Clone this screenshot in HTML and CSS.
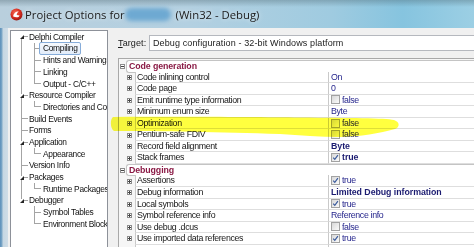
FILE: index.html
```html
<!DOCTYPE html>
<html>
<head>
<meta charset="utf-8">
<link rel="stylesheet" href="styles.css">
</head>
<body>
<div class="window">
  <div class="titlebar">
    <svg class="appicon" width="13" height="13" viewBox="0 0 13 13">
      <defs>
        <radialGradient id="rg" cx="0.4" cy="0.35" r="0.7">
          <stop offset="0" stop-color="#f46a55"/>
          <stop offset="0.6" stop-color="#d62a1e"/>
          <stop offset="1" stop-color="#8e1410"/>
        </radialGradient>
      </defs>
      <circle cx="6.5" cy="6.5" r="6" fill="url(#rg)"/>
      <path d="M3.2 8.6 C3.4 5.4 5.6 3.3 8.8 3.4 C7.2 4.4 6.6 5.6 6.8 7 L9.6 7.4 C9 9.2 6.8 10 3.2 8.6 Z" fill="#fff"/>
    </svg>
    <span class="title">Project Options for</span>
    <span class="redact"></span>
    <span class="title">(Win32 - Debug)</span>
  </div>
  <div class="client">
    <div class="tree">
      <div class="node l0 first exp"><i class="tw"></i>Delphi Compiler</div>
      <div class="node l1"><span class="sel">Compiling</span></div>
      <div class="node l1">Hints and Warnings</div>
      <div class="node l1">Linking</div>
      <div class="node l1 clast">Output - C/C++</div>
      <div class="node l0 exp"><i class="tw"></i>Resource Compiler</div>
      <div class="node l1 clast">Directories and Conditionals</div>
      <div class="node l0"><i class="tw"></i>Build Events</div>
      <div class="node l0"><i class="tw"></i>Forms</div>
      <div class="node l0 exp"><i class="tw"></i>Application</div>
      <div class="node l1 clast">Appearance</div>
      <div class="node l0"><i class="tw"></i>Version Info</div>
      <div class="node l0 exp"><i class="tw"></i>Packages</div>
      <div class="node l1 clast">Runtime Packages</div>
      <div class="node l0 last exp"><i class="tw"></i>Debugger</div>
      <div class="node l1 nol0">Symbol Tables</div>
      <div class="node l1 nol0 clast">Environment Block</div>
    </div>
    <div class="pane">
      <div class="target">
        <span class="tlabel"><u>T</u>arget:</span>
        <div class="combo">Debug configuration - 32-bit Windows platform</div>
      </div>
      <div class="grid">
        <div class="cat"><svg class="pm" width="5" height="5" viewBox="0 0 5 5"><rect x=".5" y=".5" width="4" height="4" fill="#fff" stroke="#8c8c8c"/><path d="M1 2.5H4" stroke="#444"/></svg><div class="cathead">Code generation</div></div>
        <div class="prop"><i></i><svg class="pm" width="5" height="5" viewBox="0 0 5 5"><rect x=".5" y=".5" width="4" height="4" fill="#fff" stroke="#8c8c8c"/><path d="M1 2.5H4M2.5 1V4" stroke="#444"/></svg><div class="name">Code inlining control</div><div class="val">On</div></div>
        <div class="prop"><i></i><svg class="pm" width="5" height="5" viewBox="0 0 5 5"><rect x=".5" y=".5" width="4" height="4" fill="#fff" stroke="#8c8c8c"/><path d="M1 2.5H4M2.5 1V4" stroke="#444"/></svg><div class="name">Code page</div><div class="val">0</div></div>
        <div class="prop"><i></i><svg class="pm" width="5" height="5" viewBox="0 0 5 5"><rect x=".5" y=".5" width="4" height="4" fill="#fff" stroke="#8c8c8c"/><path d="M1 2.5H4M2.5 1V4" stroke="#444"/></svg><div class="name">Emit runtime type information</div><div class="val"><span class="cb"></span>false</div></div>
        <div class="prop"><i></i><svg class="pm" width="5" height="5" viewBox="0 0 5 5"><rect x=".5" y=".5" width="4" height="4" fill="#fff" stroke="#8c8c8c"/><path d="M1 2.5H4M2.5 1V4" stroke="#444"/></svg><div class="name">Minimum enum size</div><div class="val">Byte</div></div>
        <div class="prop"><i></i><svg class="pm" width="5" height="5" viewBox="0 0 5 5"><rect x=".5" y=".5" width="4" height="4" fill="#fff" stroke="#8c8c8c"/><path d="M1 2.5H4M2.5 1V4" stroke="#444"/></svg><div class="name">Optimization</div><div class="val"><span class="cb"></span>false</div></div>
        <div class="prop"><i></i><svg class="pm" width="5" height="5" viewBox="0 0 5 5"><rect x=".5" y=".5" width="4" height="4" fill="#fff" stroke="#8c8c8c"/><path d="M1 2.5H4M2.5 1V4" stroke="#444"/></svg><div class="name">Pentium-safe FDIV</div><div class="val"><span class="cb"></span>false</div></div>
        <div class="prop"><i></i><svg class="pm" width="5" height="5" viewBox="0 0 5 5"><rect x=".5" y=".5" width="4" height="4" fill="#fff" stroke="#8c8c8c"/><path d="M1 2.5H4M2.5 1V4" stroke="#444"/></svg><div class="name">Record field alignment</div><div class="val b">Byte</div></div>
        <div class="prop"><i></i><svg class="pm" width="5" height="5" viewBox="0 0 5 5"><rect x=".5" y=".5" width="4" height="4" fill="#fff" stroke="#8c8c8c"/><path d="M1 2.5H4M2.5 1V4" stroke="#444"/></svg><div class="name">Stack frames</div><div class="val b"><span class="cb"><svg width="7" height="7" viewBox="0 0 7 7"><path d="M1.2 3.6 L2.8 5.3 L5.9 1.2" fill="none" stroke="#3a5a9c" stroke-width="1.2"/></svg></span>true</div></div>
        <div class="cat"><svg class="pm" width="5" height="5" viewBox="0 0 5 5"><rect x=".5" y=".5" width="4" height="4" fill="#fff" stroke="#8c8c8c"/><path d="M1 2.5H4" stroke="#444"/></svg><div class="cathead">Debugging</div></div>
        <div class="prop"><i></i><svg class="pm" width="5" height="5" viewBox="0 0 5 5"><rect x=".5" y=".5" width="4" height="4" fill="#fff" stroke="#8c8c8c"/><path d="M1 2.5H4M2.5 1V4" stroke="#444"/></svg><div class="name">Assertions</div><div class="val"><span class="cb"><svg width="7" height="7" viewBox="0 0 7 7"><path d="M1.2 3.6 L2.8 5.3 L5.9 1.2" fill="none" stroke="#3a5a9c" stroke-width="1.2"/></svg></span>true</div></div>
        <div class="prop"><i></i><svg class="pm" width="5" height="5" viewBox="0 0 5 5"><rect x=".5" y=".5" width="4" height="4" fill="#fff" stroke="#8c8c8c"/><path d="M1 2.5H4M2.5 1V4" stroke="#444"/></svg><div class="name">Debug information</div><div class="val b">Limited Debug information</div></div>
        <div class="prop"><i></i><svg class="pm" width="5" height="5" viewBox="0 0 5 5"><rect x=".5" y=".5" width="4" height="4" fill="#fff" stroke="#8c8c8c"/><path d="M1 2.5H4M2.5 1V4" stroke="#444"/></svg><div class="name">Local symbols</div><div class="val"><span class="cb"><svg width="7" height="7" viewBox="0 0 7 7"><path d="M1.2 3.6 L2.8 5.3 L5.9 1.2" fill="none" stroke="#3a5a9c" stroke-width="1.2"/></svg></span>true</div></div>
        <div class="prop"><i></i><svg class="pm" width="5" height="5" viewBox="0 0 5 5"><rect x=".5" y=".5" width="4" height="4" fill="#fff" stroke="#8c8c8c"/><path d="M1 2.5H4M2.5 1V4" stroke="#444"/></svg><div class="name">Symbol reference info</div><div class="val">Reference info</div></div>
        <div class="prop"><i></i><svg class="pm" width="5" height="5" viewBox="0 0 5 5"><rect x=".5" y=".5" width="4" height="4" fill="#fff" stroke="#8c8c8c"/><path d="M1 2.5H4M2.5 1V4" stroke="#444"/></svg><div class="name">Use debug .dcus</div><div class="val"><span class="cb"></span>false</div></div>
        <div class="prop"><i></i><svg class="pm" width="5" height="5" viewBox="0 0 5 5"><rect x=".5" y=".5" width="4" height="4" fill="#fff" stroke="#8c8c8c"/><path d="M1 2.5H4M2.5 1V4" stroke="#444"/></svg><div class="name">Use imported data references</div><div class="val"><span class="cb"><svg width="7" height="7" viewBox="0 0 7 7"><path d="M1.2 3.6 L2.8 5.3 L5.9 1.2" fill="none" stroke="#3a5a9c" stroke-width="1.2"/></svg></span>true</div></div>
        <div class="prop"><i></i><i></i><div class="name"></div><div class="val"></div></div>
      </div>
    </div>
  </div>
  <svg class="marker" width="474" height="247" viewBox="0 0 474 247">
    <path d="M113 117 C180 116.5 260 117 300 117.5 C350 118 385 118 394 120 C400 122 400 127 395 129 C380 133 360 137 340 137 C320 137 300 135 280 134 C220 132 160 131 114 131 C110 129 110 119 113 117 Z" fill="#ffff2e"/>
  </svg>
</div>
</body>
</html>
```

FILE: styles.css
```css
* { box-sizing: border-box; }
html, body { margin: 0; padding: 0; }
body {
  width: 474px;
  height: 247px;
  overflow: hidden;
  font-family: "Liberation Sans", Arial, sans-serif;
}
.window {
  position: relative;
  width: 474px;
  height: 247px;
  overflow: hidden;
  background: linear-gradient(to right, #5b8fba 0, #7fa9c8 2px, #c6d7e3 3px, #cfdde7 8px);
}
.titlebar {
  height: 28px;
  display: flex;
  align-items: center;
  padding-left: 10px;
  padding-top: 1px;
  background:
    linear-gradient(to bottom, rgba(70, 95, 105, 0.35) 0, rgba(70, 95, 105, 0) 7px),
    linear-gradient(to right, #b9cfdd 0, #b3d0e1 40%, #9fcbe0 70%, #86c4df 85%, #9ccfe4 100%);
}
.appicon { margin-right: 2px; flex: none; }
.title {
  font-family: "Open Sans", "Noto Sans", sans-serif;
  font-size: 11.3px;
  color: #1b1b1b;
  white-space: nowrap;
  text-shadow: 0 0 5px rgba(255, 255, 255, 0.8);
}
.redact {
  width: 46px;
  height: 13px;
  margin: 0 5px 0 0;
  border-radius: 7px;
  background: #6ea9d2;
  filter: blur(2px);
}
.client {
  display: flex;
  margin-left: 8px;
  height: 219px;
  padding: 2px 0 0 2px;
  background: #f0f0f0;
}
.tree {
  flex: none;
  width: 98px;
  height: 240px;
  background: #fff;
  border: 1px solid #8d9199;
  font-size: 8.4px;
  letter-spacing: -0.3px;
  color: #111;
  overflow: hidden;
}
.node {
  height: 11.7px;
  display: flex;
  align-items: center;
  white-space: nowrap;
  background-repeat: no-repeat;
  background-image:
    linear-gradient(#a4a4a4, #a4a4a4),
    linear-gradient(#a4a4a4, #a4a4a4);
}
.l0 {
  padding-left: 9px;
  background-position: 10px 0, 10px 50%;
  background-size: 1px 100%, 7px 1px;
}
.l0.first { background-position: 10px 100%, 10px 50%; background-size: 1px 50%, 7px 1px; }
.l0.last { background-position: 10px 0, 10px 50%; background-size: 1px 50%, 7px 1px; }
.tw {
  width: 4px;
  height: 4px;
  margin-right: 5px;
  flex: none;
}
.exp .tw {
  width: 0;
  height: 0;
  border-left: 4px solid transparent;
  border-bottom: 4px solid #262626;
  margin-top: 1px;
  background: #fff;
}
.l1 {
  padding-left: 32px;
  background-image:
    linear-gradient(#a4a4a4, #a4a4a4),
    linear-gradient(#a4a4a4, #a4a4a4),
    linear-gradient(#a4a4a4, #a4a4a4);
  background-position: 10px 0, 23px 0, 23px 50%;
  background-size: 1px 100%, 1px 100%, 7px 1px;
}
.l1.clast { background-size: 1px 100%, 1px 50%, 7px 1px; }
.l1.nol0 { background-size: 0 0, 1px 100%, 7px 1px; }
.l1.nol0.clast { background-size: 0 0, 1px 50%, 7px 1px; }
.sel {
  margin-left: -4px;
  height: 13px;
  line-height: 11px;
  padding: 0 2px 0 3px;
  border: 1px solid #86acd9;
  border-radius: 2px;
  background: linear-gradient(#f6f9fe, #e2ecf9);
}
.pane {
  flex: 1;
  min-width: 0;
  padding: 5px 0 0 10px;
}
.target {
  display: flex;
  align-items: center;
  height: 16px;
  font-size: 9px;
  letter-spacing: 0.12px;
  color: #1b1b1b;
}
.tlabel { width: 31px; flex: none; }
.combo {
  flex: 1;
  height: 16px;
  margin-right: -6px;
  background: #fff;
  border: 1px solid #b5b8be;
  border-right: none;
  padding-left: 3px;
  line-height: 14px;
  white-space: nowrap;
}
.grid {
  margin-top: 7px;
  border-top: 1px solid #a8a8a8;
  border-left: 1px solid #a8a8a8;
  background: #f6f6f6;
  padding-top: 1px;
  font-size: 8.8px;
  letter-spacing: -0.35px;
  height: 200px;
}
.cat, .prop {
  display: grid;
  grid-template-columns: 7px 9px 193px 1fr;
  height: 11.55px;
  line-height: 10.5px;
  white-space: nowrap;
}
.cat .pm { grid-column: 1; align-self: center; justify-self: center; }
.prop .pm { grid-column: 2; align-self: center; margin-left: 1px; }
.cathead {
  grid-column: 2 / -1;
  background: #fff;
  border: 1px solid #c4c4c4;
  border-right: none;
  border-radius: 3px 0 0 3px;
  padding-left: 2px;
  font-weight: bold;
  letter-spacing: -0.1px;
  color: #8a1a45;
}
.name {
  background: #fff;
  border-left: 1px solid #c9c9c9;
  border-bottom: 1px solid #dedede;
  padding-left: 1px;
  color: #161616;
  overflow: hidden;
}
.val {
  display: flex;
  align-items: center;
  background: #fff;
  border-left: 1px solid #c9c9c9;
  border-bottom: 1px solid #dedede;
  padding-left: 2px;
  color: #25258c;
}
.val.b { font-weight: bold; color: #1b1b70; letter-spacing: -0.05px; }
.cb {
  width: 9px;
  height: 9px;
  flex: none;
  margin-right: 2px;
  border: 1px solid #a2a2a2;
  background: linear-gradient(135deg, #d8d8d8, #fbfbfb);
  display: flex;
  align-items: center;
  justify-content: center;
}
.marker {
  position: absolute;
  left: 0;
  top: 0;
  pointer-events: none;
  mix-blend-mode: multiply;
  opacity: 0.92;
}
```
